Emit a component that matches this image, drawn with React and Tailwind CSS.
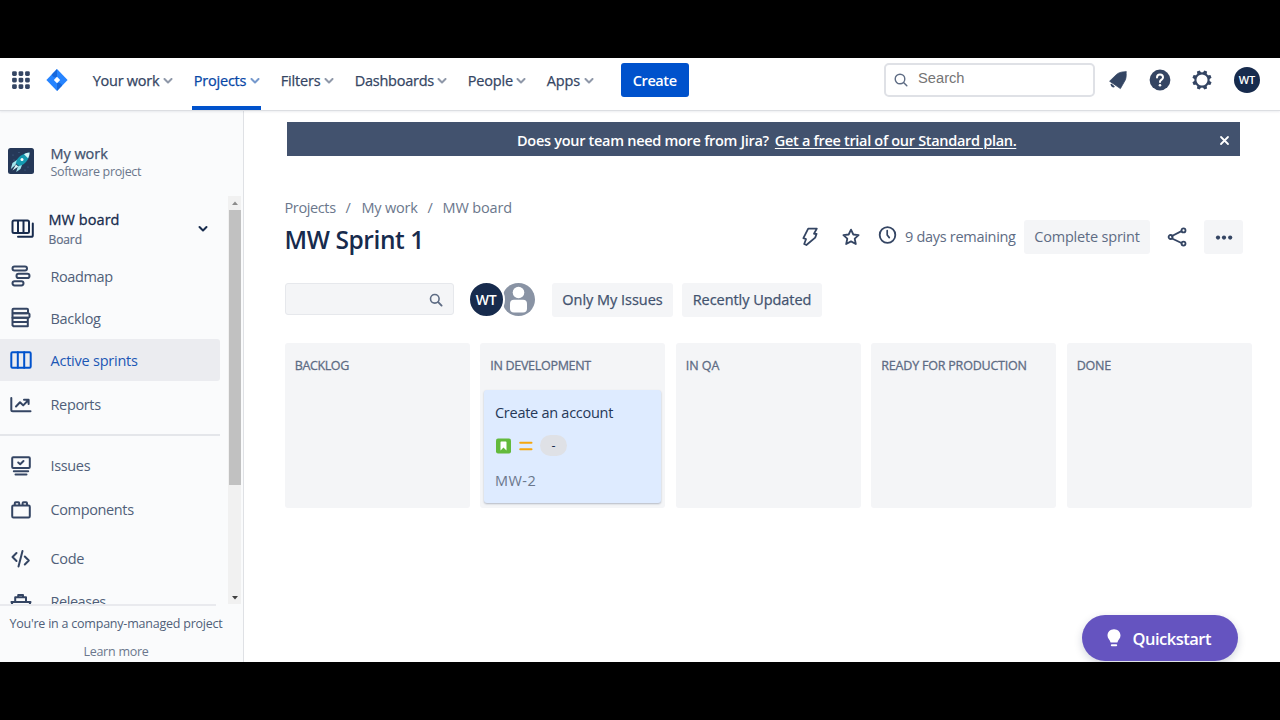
import React from "react";

const navItems = [
  { label: "Your work", width: "w-[80px]", tracking: "tracking-[-0.25px]" },
  { label: "Projects", width: "w-[66px]", tracking: "tracking-[-0.2px]", active: true },
  { label: "Filters", width: "w-[53px]", tracking: "tracking-[-0.15px]" },
  { label: "Dashboards", width: "w-[92px]", tracking: "tracking-[-0.25px]" },
  { label: "People", width: "w-[58px]", tracking: "tracking-[-0.15px]" },
  { label: "Apps", width: "w-[47px]", tracking: "tracking-[-0.1px]" },
];

const columns = [
  { title: "BACKLOG", tracking: "tracking-[-0.4px]" },
  { title: "IN DEVELOPMENT", tracking: "tracking-[-0.3px]", card: true },
  { title: "IN QA", tracking: "tracking-[-0.05px]" },
  { title: "READY FOR PRODUCTION", tracking: "tracking-[-0.2px]" },
  { title: "DONE", tracking: "tracking-[-0.25px]" },
];

function Icon({ w = 24, h = 24, box, className = "", children }) {
  return (
    <svg
      width={w}
      height={h}
      viewBox={box || `0 0 ${w} ${h}`}
      fill="none"
      stroke="currentColor"
      strokeWidth="2"
      strokeLinecap="round"
      strokeLinejoin="round"
      className={"shrink-0 " + className}
    >
      {children}
    </svg>
  );
}

function Chevron() {
  return (
    <Icon w={10} h={8} className="opacity-55">
      <path d="M1.5 2L5 5.5L8.5 2" />
    </Icon>
  );
}

function AppSwitcher() {
  return (
    <Icon w={18} h={18} className="text-[#344563]">
      {[0, 6.5, 13].map((y) =>
        [0, 6.5, 13].map((x) => (
          <rect key={x + "-" + y} x={x + 0.1} y={y + 0.2} width="4.7" height="4.7" rx="1.4" fill="currentColor" stroke="none" />
        ))
      )}
    </Icon>
  );
}

function JiraLogo() {
  return (
    <Icon w={22} h={22}>
      <path d="M11 0L21.6 11L11 22L0.4 11Z" fill="#2684ff" stroke="none" />
      <path d="M11 0L5.8 5.4C6.8 8.2 8.4 8.6 11 8.2Z" fill="#1868db" stroke="none" />
      <path d="M11 22L16.2 16.6C15.2 13.8 13.6 13.4 11 13.8Z" fill="#1868db" stroke="none" />
      <path d="M11 7.7L14.2 11L11 14.3L7.8 11Z" fill="#fff" stroke="none" />
    </Icon>
  );
}

function RocketAvatar() {
  return (
    <Icon w={26} h={26}>
      <rect width="26" height="26" rx="2.5" fill="#253858" stroke="none" />
      <g fill="#4c6a92" stroke="none">
        <circle cx="5" cy="7" r=".6" />
        <circle cx="11" cy="4.5" r=".6" />
        <circle cx="20" cy="19" r=".6" />
        <circle cx="17" cy="22" r=".6" />
        <circle cx="6" cy="12" r=".6" />
      </g>
      <path d="M21.5 4.5C16 5 10.5 8 7 14.5L11.5 18.5C18 15.5 21.5 11 21.5 4.5Z" fill="#1599b0" stroke="none" />
      <path d="M21.5 4.5C19.6 4.7 17.6 5.2 16 6.2L20 10.2C21 8.5 21.5 6.5 21.5 4.5Z" fill="#d5f5f8" stroke="none" />
      <path d="M8.8 12L4.5 15L2.8 21L7.5 17Z" fill="#a5e6ee" stroke="none" />
      <path d="M14 17L12.5 21L8.2 24L9.8 18.5Z" fill="#a5e6ee" stroke="none" />
      <path d="M8 16.5L4.5 22.5L10.3 18.5Z" fill="#d8f6f9" stroke="none" />
      <circle cx="14" cy="11.5" r="1.5" fill="#fff" stroke="none" />
    </Icon>
  );
}

function SideItem({ height, icon, label, active, tracking = "tracking-[-0.3px]" }) {
  return (
    <div
      className={
        "flex w-[220px] shrink-0 items-center pl-[10px] " +
        height +
        (active ? " rounded-r-[3px] bg-[#ebecf0] text-[#0052cc]" : " text-[#344563]")
      }
    >
      <div className="flex w-[40.5px] shrink-0">{icon}</div>
      <span className={"whitespace-nowrap text-[14.5px] leading-5 " + tracking + (active ? " pt-[2px] text-[#1c57b5]" : " text-[#505f79]")}>
        {label}
      </span>
    </div>
  );
}

function Sidebar() {
  return (
    <aside className="flex w-[244px] shrink-0 flex-col border-r border-[#dfe1e5] bg-[#fafbfc]">
      <div className="flex h-[85px] shrink-0 items-start pl-2 pt-[33px]">
        <div className="mt-[4px]">
          <RocketAvatar />
        </div>
        <div className="ml-[16.5px] flex flex-col">
          <span className="text-[14.5px] leading-5 tracking-[-0.05px] text-[#42526e] [-webkit-text-stroke:0.25px]">My work</span>
          <span className="text-[12.5px] leading-4 tracking-[-0.33px] text-[#6b778c]">Software project</span>
        </div>
      </div>
      <div className="flex h-[408px] shrink-0 overflow-hidden">
        <nav className="flex w-[228px] shrink-0 flex-col overflow-hidden">
          <div className="flex h-[60px] shrink-0 items-start pt-[14px]">
            <Icon w={25} h={20} className="ml-[10.5px] mt-[8.5px] text-[#172b4d]">
              <rect x="1.5" y="1.5" width="16.5" height="12.5" rx="1.5" />
              <path d="M7 2V14M12.5 2V14M21.8 4.5V16.2C21.8 17.2 21.2 17.8 20.2 17.8H7" />
            </Icon>
            <div className="ml-[13px] flex w-[150px] flex-col">
              <span className="text-[14.5px] leading-5 tracking-[0.05px] text-[#172b4d] [-webkit-text-stroke:0.3px]">MW board</span>
              <span className="text-[12px] leading-[19px] tracking-[-0.1px] text-[#5e6c84] [-webkit-text-stroke:0.2px]">Board</span>
            </div>
            <Icon w={10} h={8} className="-ml-[1px] mt-[15px] text-[#172b4d]">
              <path d="M1.5 2L5 5.5L8.5 2" />
            </Icon>
          </div>
          <SideItem
            height="h-[42px]"
            label="Roadmap"
            tracking="tracking-[-0.4px]"
            icon={
              <Icon w={22} h={22} className="-mt-[2px]">
                <rect x="2.5" y="1.5" width="14.5" height="4" rx="2" />
                <rect x="6.5" y="8.8" width="13" height="4.2" rx="2.1" />
                <rect x="2.5" y="16.2" width="11" height="4.2" rx="2.1" />
              </Icon>
            }
          />
          <SideItem
            height="h-[41px]"
            label="Backlog"
            icon={
              <Icon w={22} h={22} className="-mt-[2px]">
                <rect x="2.5" y="1.8" width="15.5" height="4.5" rx="1" />
                <path d="M2.5 6.3H18.5L19.5 7.3V9.8L18.5 10.8H2.5V6.3" />
                <path d="M2.5 10.8H17.8V19.2H3.5L2.5 18.2V10.8M2.5 15H17.5" />
              </Icon>
            }
          />
          <SideItem
            height="h-[42px]"
            label="Active sprints"
            tracking="tracking-[-0.23px]"
            active
            icon={
              <Icon w={22} h={20}>
                <rect x="1.3" y="2.3" width="19.4" height="15.4" rx="1.2" />
                <path d="M7.8 2.3V17.7M14.2 2.3V17.7" />
              </Icon>
            }
          />
          <SideItem
            height="h-[48px]"
            label="Reports"
            tracking="tracking-[-0.35px]"
            icon={
              <Icon w={22} h={18}>
                <path d="M1.3 2V13.8C1.3 14.8 1.8 15.3 2.8 15.3H20.5" />
                <path d="M6 10.5L10 6.2L13.2 9.4L18.2 4.2M14 3.8H18.6V8" />
              </Icon>
            }
          />
          <div className="mb-2 mt-[5px] h-[2px] w-[220px] shrink-0 bg-[#e4e6ea]" />
          <SideItem
            height="h-[44px]"
            label="Issues"
            tracking="tracking-[-0.35px]"
            icon={
              <Icon w={22} h={22}>
                <rect x="2.2" y="2.2" width="17.6" height="10.8" rx="1" />
                <path d="M8.2 7.5L10.2 9.2L13.5 6M3.8 16.2H18.2M5.5 19.5H16.5" />
              </Icon>
            }
          />
          <SideItem
            height="h-[44px]"
            label="Components"
            tracking="tracking-[-0.37px]"
            icon={
              <Icon w={22} h={20}>
                <rect x="2.2" y="5.5" width="17.6" height="12" rx="1.2" />
                <path d="M4.8 5V3.2C4.8 2.6 5.1 2.2 5.7 2.2H8.3C8.9 2.2 9.2 2.6 9.2 3.2V5M12.6 5V3.2C12.6 2.6 12.9 2.2 13.5 2.2H16.1C16.7 2.2 17 2.6 17 3.2V5" />
              </Icon>
            }
          />
          <SideItem
            height="h-[54px]"
            label="Code"
            icon={
              <Icon w={22} h={20}>
                <path d="M6.5 4L2.5 8L6.5 12M12.5 2L8.5 17.5M14.8 7.5L18.8 11.5L14.8 15.5" />
              </Icon>
            }
          />
          <SideItem
            height="h-[31px]"
            label="Releases"
            tracking="tracking-[-0.45px]"
            icon={
              <Icon w={22} h={20}>
                <path d="M8.2 4.5V3H13V4.5M5.2 9.5V5.2H16V9.5M1.5 10H20.5L18 17H4Z" />
              </Icon>
            }
          />
        </nav>
        <div className="flex w-[13px] shrink-0 flex-col items-center bg-[#f1f1f1]">
          <div className="flex h-[14px] items-center justify-center">
            <svg width="6" height="4" viewBox="0 0 6 4" fill="#8c8c8c">
              <path d="M0 4L3 0.5L6 4Z" />
            </svg>
          </div>
          <div className="ml-px h-[275px] w-[12px] bg-[#c1c1c1]" />
          <div className="mt-auto flex h-[12px] items-center justify-center">
            <svg width="6" height="4" viewBox="0 0 6 4" fill="#404040">
              <path d="M0 0L3 3.5L6 0Z" />
            </svg>
          </div>
        </div>
      </div>
      <div className="flex flex-1 flex-col">
        <div className="h-[2px] w-[216px] bg-[#e9eaee]" />
        <div className="flex flex-col items-center pr-[11px] pt-[9px]">
          <span className="whitespace-nowrap text-[12.5px] leading-[18px] tracking-[-0.22px] text-[#505f79]">
            You're in a company-managed project
          </span>
          <span className="mt-[10px] whitespace-nowrap text-[12.5px] leading-[18px] tracking-[-0.25px] text-[#6b778c]">Learn more</span>
        </div>
      </div>
    </aside>
  );
}

function Header() {
  return (
    <header className="z-10 flex h-[53px] shrink-0 items-center border-b border-[#dcdee2] bg-white shadow-[0_1px_2px_rgba(9,30,66,0.08)]">
      <div className="flex w-[93px] shrink-0 items-center pb-[9px] pl-3">
        <AppSwitcher />
        <div className="ml-4">
          <JiraLogo />
        </div>
      </div>
      <nav className="-ml-[0.3px] flex h-[52px] gap-[21px]">
        {navItems.map((item) => (
          <div
            key={item.label}
            className={
              "relative flex h-[52px] items-center justify-between whitespace-nowrap pb-[6px] text-[14.5px] leading-5 [-webkit-text-stroke:0.25px] " +
              item.width +
              " " +
              item.tracking +
              (item.active ? " text-[#0747a6]" : " text-[#344563]")
            }
          >
            <span>{item.label}</span>
            <Chevron />
            {item.active && <div className="absolute -left-[2px] bottom-0 h-[4px] w-[69px] bg-[#0052cc]" />}
          </div>
        ))}
      </nav>
      <button className="mb-[8px] ml-[27px] h-[34px] w-[68px] rounded-[3px] bg-[#0052cc] pt-[2px] text-[14.5px] font-semibold leading-5 tracking-[-0.4px] text-white">
        Create
      </button>
      <div className="mb-[8px] ml-auto flex items-center">
        <div className="flex h-[34px] w-[211px] items-center rounded-[5px] border-2 border-[#dfe1e6] pl-[8px]">
          <Icon w={14} h={14} className="text-[#5e6c84]">
            <circle cx="6" cy="6" r="4.8" strokeWidth="1.4" />
            <path d="M9.8 9.8L12.8 12.8" strokeWidth="1.5" />
          </Icon>
          <span className="mb-[4px] ml-[10px] font-['Liberation_Sans',sans-serif] text-[14.7px] leading-5 text-[#757575]">Search</span>
        </div>
        <Icon w={20} h={20} className="ml-[13px] text-[#344563]">
          <path d="M18 1.8C14.5 1.6 11 2.4 8.6 4.4L1.6 11.2L12.4 18.6L17.4 9.8C18.3 7.2 18.4 4.4 18 1.8Z" fill="currentColor" stroke="currentColor" strokeWidth="0.8" />
          <path d="M2.8 14.2C2.6 16.2 3.8 17.4 6 17.4L6.8 16.4L3.4 13.6Z" fill="currentColor" stroke="none" />
        </Icon>
        <Icon w={22} h={22} className="ml-[21px]">
          <circle cx="11" cy="11" r="10.4" fill="#344563" stroke="none" />
          <path d="M8 8.6C8 6.7 9.3 5.6 11 5.6S14 6.7 14 8.4C14 10.6 11 10.7 11 13" stroke="#fff" />
          <circle cx="11" cy="16.3" r="1.3" fill="#fff" stroke="none" />
        </Icon>
        <Icon w={20} h={20} className="ml-[21px] text-[#344563]">
          <circle cx="10" cy="10" r="6.6" strokeWidth="2.1" />
          {[22.5, 67.5, 112.5, 157.5, 202.5, 247.5, 292.5, 337.5].map((a) => (
            <path key={a} d="M7.9 3.4L8.5 0.3H11.5L12.1 3.4Z" fill="currentColor" stroke="none" transform={`rotate(${a} 10 10)`} />
          ))}
        </Icon>
        <div className="ml-[22px] mr-5 flex size-[26px] items-center justify-center rounded-full bg-[#172b4d] text-[11px] font-semibold text-white">
          WT
        </div>
      </div>
    </header>
  );
}

function Avatars() {
  return (
    <div className="flex items-center">
      <div className="z-10 -mx-[2px] -my-[2px] flex size-[37px] items-center justify-center rounded-full border-2 border-white bg-[#172b4d] text-[14px] font-semibold tracking-[-0.2px] text-white">
        WT
      </div>
      <Icon w={33} h={33} className="-ml-[1px]">
        <circle cx="16.5" cy="16.5" r="16.5" fill="#8993a4" stroke="none" />
        <circle cx="16.5" cy="9.5" r="5.8" fill="#fff" stroke="none" />
        <rect x="8" y="16.8" width="17" height="12.6" rx="4" fill="#fff" stroke="none" />
      </Icon>
    </div>
  );
}

function IssueCard() {
  return (
    <div className="ml-[4px] flex h-[113px] w-[176.5px] flex-col rounded-[3px] bg-[#deebff] pl-[11px] pt-[13px] shadow-[0_1px_2px_rgba(9,30,66,0.28)]">
      <span className="whitespace-nowrap text-[14.5px] leading-5 tracking-[-0.27px] text-[#253858]">Create an account</span>
      <div className="mt-[12px] flex h-[21px] items-center">
        <Icon w={17} h={16}>
          <rect x="1" y="0.5" width="15" height="15" rx="2" fill="#63ba3c" stroke="none" />
          <path d="M5.5 4.2C5.5 3.8 5.8 3.5 6.2 3.5H10.8C11.2 3.5 11.5 3.8 11.5 4.2V12.5L8.5 9.6L5.5 12.5Z" fill="#fff" stroke="none" />
        </Icon>
        <Icon w={14} h={12} className="ml-[7px] text-[#f5a70f]">
          <path d="M1.2 2.8H12.5M1.2 9.2H12.5" strokeWidth="2" />
        </Icon>
        <span className="ml-[7px] flex h-[21px] w-[27px] items-center justify-center rounded-full bg-[#dfe1e6] pt-[2px] text-[12.5px] font-medium text-[#172b4d]">
          -
        </span>
      </div>
      <span className="mt-[15px] text-[14.5px] leading-5 tracking-[0.45px] text-[#6b778c]">MW-2</span>
    </div>
  );
}

function Board() {
  return (
    <main className="relative flex min-w-0 flex-1 flex-col">
      <div className="ml-[43px] mt-[11px] flex h-[34px] w-[953px] shrink-0 items-center bg-[#42526e] pl-[230px] pr-[10px] pt-[4px] text-[14.5px] font-semibold leading-5 text-white">
        <span className="whitespace-nowrap tracking-[-0.29px]">Does your team need more from Jira?</span>
        <span className="ml-[6px] whitespace-nowrap tracking-[-0.31px] underline underline-offset-2">Get a free trial of our Standard plan.</span>
        <Icon w={11} h={11} className="mb-px ml-auto">
          <path d="M2 2L9 9M9 2L2 9" strokeWidth="1.8" />
        </Icon>
      </div>

      <div className="flex h-[127px] shrink-0 pl-[41px]">
        <div className="-ml-[0.5px] flex flex-col pt-[42px]">
          <div className="flex whitespace-nowrap text-[14.5px] leading-5 tracking-[-0.3px] text-[#6b778c]">
            <span className="w-[61px] tracking-[-0.38px]">Projects</span>
            <span className="w-[16px]">/</span>
            <span className="w-[66px] tracking-[-0.2px]">My work</span>
            <span className="w-[15px]">/</span>
            <span className="tracking-[-0.15px]">MW board</span>
          </div>
          <h1 className="mt-[6px] whitespace-nowrap text-[24.5px] font-semibold leading-8 tracking-[-0.4px] text-[#172b4d]">MW Sprint 1</h1>
        </div>
        <div className="ml-auto mt-[64px] flex h-[34px] items-center pr-[37px] text-[#344563]">
          <Icon w={18} h={20}>
            <path d="M7.2 1.6H15.8L13 6.8H15.6L14.2 10.6L5.4 18L3.2 17L5 12.2L2.4 11.2Z" strokeWidth="1.8" />
          </Icon>
          <Icon w={20} h={20} className="ml-[22px]">
            <path d="M10 2.6L12.3 7.5L17.6 8.1L13.7 11.7L14.8 17L10 14.4L5.2 17L6.3 11.7L2.4 8.1L7.7 7.5Z" strokeWidth="1.8" />
          </Icon>
          <Icon w={20} h={20} className="mb-[4px] ml-[17px]">
            <circle cx="9.5" cy="10" r="7.8" strokeWidth="1.8" />
            <path d="M9.2 5.5V10L11.3 12.6" strokeWidth="1.7" />
          </Icon>
          <span className="ml-[7px] w-[119px] whitespace-nowrap text-[14.5px] leading-5 tracking-[-0.3px] text-[#5e6c84]">9 days remaining</span>
          <button className="flex h-[34px] w-[126px] items-center justify-center whitespace-nowrap rounded-[3px] bg-[#f4f5f7] text-[14.5px] leading-5 tracking-[-0.2px] text-[#5e6c84]">
            Complete sprint
          </button>
          <Icon w={20} h={20} className="mb-px ml-[17px]">
            <path d="M5 9L14.5 4.2M5 11.5L14.5 16" strokeWidth="1.9" />
            <circle cx="3.6" cy="10" r="2" strokeWidth="1.8" />
            <circle cx="16.5" cy="3.4" r="2" strokeWidth="1.8" />
            <circle cx="16.5" cy="16.6" r="2" strokeWidth="1.8" />
          </Icon>
          <div className="ml-[17px] flex h-[34px] w-[39px] items-center justify-center rounded-[3px] bg-[#f4f5f7]">
            <svg width="18" height="6" viewBox="0 0 18 6" fill="#344563">
              <circle cx="3" cy="3.6" r="2.1" />
              <circle cx="9" cy="3.6" r="2.1" />
              <circle cx="15.2" cy="3.6" r="2.1" />
            </svg>
          </div>
        </div>
      </div>

      <div className="flex h-[60px] shrink-0 items-start pl-[40.5px]">
        <div className="flex h-[32px] w-[169px] items-center justify-end rounded-[3px] border border-[#e6e8ec] bg-[#f4f5f7] pr-[10px] pt-[2px]">
          <Icon w={14} h={14} className="text-[#5e6c84]">
            <circle cx="5.8" cy="5.8" r="4.3" strokeWidth="1.6" />
            <path d="M9.2 9.2L12.6 12.6" strokeWidth="1.9" />
          </Icon>
        </div>
        <div className="ml-[16px]">
          <Avatars />
        </div>
        <button className="ml-[17.5px] flex h-[34px] w-[121px] items-center justify-center whitespace-nowrap rounded-[3px] bg-[#f4f5f7] text-[14.5px] leading-5 tracking-[-0.02px] text-[#42526e] [-webkit-text-stroke:0.25px]">
          Only My Issues
        </button>
        <button className="ml-[9px] flex h-[34px] w-[140px] items-center justify-center whitespace-nowrap rounded-[3px] bg-[#f4f5f7] text-[14.5px] leading-5 tracking-[-0.05px] text-[#42526e] [-webkit-text-stroke:0.25px]">
          Recently Updated
        </button>
      </div>

      <div className="grid w-[1007.5px] shrink-0 grid-cols-5 gap-[10.5px] pl-[40.5px]">
        {columns.map((c) => (
          <section key={c.title} className="flex h-[165px] flex-col rounded-[3px] bg-[#f4f5f7]">
            <h2
              className={
                "flex h-[47px] shrink-0 items-center whitespace-nowrap pl-[10.3px] text-[12.5px] text-[#5e6c84] [-webkit-text-stroke:0.3px] " + c.tracking
              }
            >
              {c.title}
            </h2>
            {c.card && <IssueCard />}
          </section>
        ))}
      </div>

      <button className="absolute bottom-[1px] right-[42px] flex h-[46px] w-[156px] items-center rounded-full bg-[#6554c0] pl-[25px] text-white shadow-[0_3px_8px_rgba(9,30,66,0.18)]">
        <Icon w={14} h={18}>
          <path d="M7 0.3C3.2 0.3 0.5 3.1 0.5 6.6C0.5 9.6 2.8 10.7 3.6 13.6H10.4C11.2 10.7 13.5 9.6 13.5 6.6C13.5 3.1 10.8 0.3 7 0.3Z" fill="currentColor" stroke="none" />
          <path d="M4.8 16.2H9.2" strokeWidth="2" />
        </Icon>
        <span className="ml-[11.5px] mt-[2px] whitespace-nowrap text-[16.5px] font-semibold leading-6 tracking-[-0.5px]">Quickstart</span>
      </button>
    </main>
  );
}

export default function App() {
  return (
    <div className="flex h-[720px] w-[1280px] flex-col overflow-hidden bg-black py-[58px] font-['Open_Sans','Noto_Sans',sans-serif]">
      <div className="flex h-[604px] shrink-0 flex-col overflow-hidden bg-white">
        <Header />
        <div className="flex min-h-0 flex-1">
          <Sidebar />
          <Board />
        </div>
      </div>
    </div>
  );
}
